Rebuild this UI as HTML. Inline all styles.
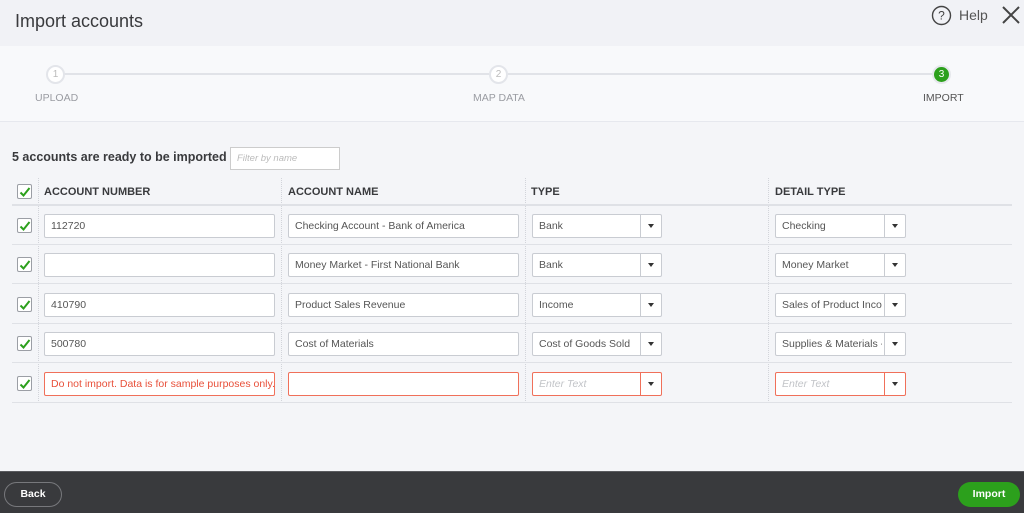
<!DOCTYPE html>
<html><head><meta charset="utf-8"><style>
*{box-sizing:border-box;margin:0;padding:0}
body{width:1024px;height:513px;overflow:hidden;background:#f4f5f8;font-family:"Liberation Sans",sans-serif;position:relative;color:#393a3d}
.a{position:absolute}
.hdr{left:0;top:0;width:1024px;height:46px;background:#f1f2f6}
.step{left:0;top:46px;width:1024px;height:76px;background:#f8f9fb;border-bottom:1px solid #e6e8ee}
.circ{width:19px;height:19px;border-radius:50%;background:#fff;border:2px solid #e3e5ea;font-size:10px;color:#bbb;text-align:center;line-height:15px}
.lbl{font-size:10.5px;color:#9a9ca2;top:92px}
.line{top:73px;height:2px;background:#e1e3e8}
.chk{width:15px;height:15px;border:1px solid #9b9ea5;background:#fff;border-radius:2px}
.chk svg{position:absolute;left:1px;top:1px}
.th{font-size:11px;font-weight:bold;color:#393a3d;top:186px}
.hl{left:12px;width:1000px;height:1px;background:#dfe1e6}
.vl{width:0;border-left:1px dotted #d2d4da;top:178px;height:225px}
.in{height:24px;background:#fff;border:1px solid #c9ccd2;border-radius:2px;font-size:10.5px;color:#555;padding-left:6px;line-height:23px;white-space:nowrap;overflow:hidden}
.sel{height:24px;background:#fff;border:1px solid #c9ccd2;border-radius:2px;font-size:10.5px;color:#555;line-height:23px}
.sel span{position:absolute;left:6px;top:0;white-space:nowrap;overflow:hidden;width:100px}
.sel i{position:absolute;right:0;top:0;width:21px;height:22px;border-left:1px solid #c9ccd2}
.sel i:after{content:"";position:absolute;left:7px;top:9px;border-left:3.5px solid transparent;border-right:3.5px solid transparent;border-top:4px solid #333}
.err{border-color:#f0705a}
.err i{border-left-color:#f0705a}
.ph{color:#c2c4c8;font-style:italic}
</style></head><body>
<div class="a hdr"></div>
<div class="a" style="left:15px;top:11px;font-size:18px;color:#393a3d">Import accounts</div>
<svg class="a" style="left:931px;top:5px" width="21" height="21" viewBox="0 0 21 21"><circle cx="10.5" cy="10.5" r="9" fill="none" stroke="#444" stroke-width="1.4"/><text x="10.5" y="14.5" font-size="12" text-anchor="middle" fill="#444" font-family="Liberation Sans">?</text></svg>
<div class="a" style="left:959px;top:7px;font-size:14px;color:#555">Help</div>
<svg class="a" style="left:1002px;top:6px" width="18" height="18" viewBox="0 0 18 18"><path d="M1 1L17 17M17 1L1 17" stroke="#444" stroke-width="2"/></svg>
<div class="a step"></div>
<div class="a line" style="left:64px;width:425px"></div>
<div class="a line" style="left:508px;width:425px"></div>
<div class="a circ" style="left:46px;top:65px">1</div>
<div class="a circ" style="left:489px;top:65px">2</div>
<div class="a circ" style="left:932px;top:65px;background:#2ca01c;border-color:#e6e8ec;color:#fff">3</div>
<div class="a lbl" style="left:35px">UPLOAD</div>
<div class="a lbl" style="left:473px">MAP DATA</div>
<div class="a lbl" style="left:923px;color:#555">IMPORT</div>
<div class="a" style="left:12px;top:150px;font-size:12.5px;font-weight:bold;color:#393a3d">5 accounts are ready to be imported</div>
<div class="a" style="left:230px;top:147px;width:110px;height:23px;background:#fff;border:1px solid #ccc;font-size:9.5px;color:#bbb;font-style:italic;padding-left:6px;line-height:21px">Filter by name</div>
<div class="a vl" style="left:38px"></div><div class="a vl" style="left:281px"></div><div class="a vl" style="left:525px"></div><div class="a vl" style="left:768px"></div>
<div class="a th" style="left:44px">ACCOUNT NUMBER</div>
<div class="a th" style="left:288px">ACCOUNT NAME</div>
<div class="a th" style="left:531px">TYPE</div>
<div class="a th" style="left:775px">DETAIL TYPE</div>
<div class="a hl" style="top:204px;height:2px"></div>
<div class="a hl" style="top:244px"></div><div class="a hl" style="top:283px"></div><div class="a hl" style="top:323px"></div><div class="a hl" style="top:362px"></div><div class="a hl" style="top:402px"></div>

<div class="a chk" style="left:17px;top:184px"><svg width="12" height="12" viewBox="0 0 12 12"><path d="M1.5 6.5L4.5 9.5L10.5 2" fill="none" stroke="#2ca01c" stroke-width="2"/></svg></div>
<div class="a chk" style="left:17px;top:218px"><svg width="12" height="12" viewBox="0 0 12 12"><path d="M1.5 6.5L4.5 9.5L10.5 2" fill="none" stroke="#2ca01c" stroke-width="2"/></svg></div>
<div class="a chk" style="left:17px;top:257px"><svg width="12" height="12" viewBox="0 0 12 12"><path d="M1.5 6.5L4.5 9.5L10.5 2" fill="none" stroke="#2ca01c" stroke-width="2"/></svg></div>
<div class="a chk" style="left:17px;top:297px"><svg width="12" height="12" viewBox="0 0 12 12"><path d="M1.5 6.5L4.5 9.5L10.5 2" fill="none" stroke="#2ca01c" stroke-width="2"/></svg></div>
<div class="a chk" style="left:17px;top:336px"><svg width="12" height="12" viewBox="0 0 12 12"><path d="M1.5 6.5L4.5 9.5L10.5 2" fill="none" stroke="#2ca01c" stroke-width="2"/></svg></div>
<div class="a chk" style="left:17px;top:376px"><svg width="12" height="12" viewBox="0 0 12 12"><path d="M1.5 6.5L4.5 9.5L10.5 2" fill="none" stroke="#2ca01c" stroke-width="2"/></svg></div>

<div class="a in" style="left:44px;top:214px;width:231px">112720</div>
<div class="a in" style="left:288px;top:214px;width:231px">Checking Account - Bank of America</div>
<div class="a sel" style="left:532px;top:214px;width:130px"><span>Bank</span><i></i></div>
<div class="a sel" style="left:775px;top:214px;width:131px"><span>Checking</span><i></i></div>

<div class="a in" style="left:44px;top:253px;width:231px"></div>
<div class="a in" style="left:288px;top:253px;width:231px">Money Market - First National Bank</div>
<div class="a sel" style="left:532px;top:253px;width:130px"><span>Bank</span><i></i></div>
<div class="a sel" style="left:775px;top:253px;width:131px"><span>Money Market</span><i></i></div>

<div class="a in" style="left:44px;top:293px;width:231px">410790</div>
<div class="a in" style="left:288px;top:293px;width:231px">Product Sales Revenue</div>
<div class="a sel" style="left:532px;top:293px;width:130px"><span>Income</span><i></i></div>
<div class="a sel" style="left:775px;top:293px;width:131px"><span>Sales of Product Income</span><i></i></div>

<div class="a in" style="left:44px;top:332px;width:231px">500780</div>
<div class="a in" style="left:288px;top:332px;width:231px">Cost of Materials</div>
<div class="a sel" style="left:532px;top:332px;width:130px"><span>Cost of Goods Sold</span><i></i></div>
<div class="a sel" style="left:775px;top:332px;width:131px"><span>Supplies &amp; Materials -</span><i></i></div>

<div class="a in err" style="left:44px;top:372px;width:231px;color:#e8503a">Do not import. Data is for sample purposes only.</div>
<div class="a in err" style="left:288px;top:372px;width:231px"></div>
<div class="a sel err" style="left:532px;top:372px;width:130px"><span class="ph">Enter Text</span><i></i></div>
<div class="a sel err" style="left:775px;top:372px;width:131px"><span class="ph">Enter Text</span><i></i></div>

<div class="a" style="left:0;top:471px;width:1024px;height:42px;background:#393a3d;border-top:1px solid #5a5b5f"></div>
<div class="a" style="left:4px;top:482px;width:58px;height:25px;border:1px solid #77787c;border-radius:13px;color:#fff;font-size:10.5px;font-weight:bold;text-align:center;line-height:23px">Back</div>
<div class="a" style="left:958px;top:482px;width:62px;height:25px;background:#2ca01c;border-radius:13px;color:#fff;font-size:10.5px;font-weight:bold;text-align:center;line-height:25px">Import</div>
</body></html>
